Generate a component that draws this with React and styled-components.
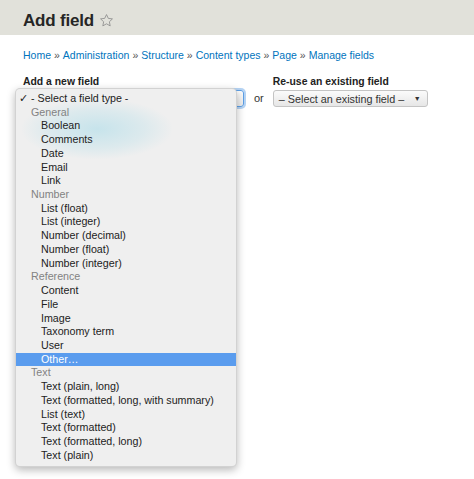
import { Fragment } from "react";
import styled, { createGlobalStyle } from "styled-components";

const GlobalStyle = createGlobalStyle`
  body {
    margin: 0;
    background: #ffffff;
    font-family: "Liberation Sans", Arial, sans-serif;
    color: #333333;
  }

  #root {
    min-height: 100vh;
  }
`;

const Header = styled.header`
  align-items: center;
  background-color: #e1e1da;
  box-sizing: border-box;
  display: flex;
  gap: 5px;
  height: 35px;
  padding: 6px 23px 0;
`;

const Title = styled.h1`
  color: #262626;
  font-family: "Liberation Sans", sans-serif;
  font-size: 17px;
  font-weight: 700;
  letter-spacing: -0.2px;
  margin: 0;
`;

const Star = styled.svg`
  height: 15px;
  width: 15px;
`;

const Main = styled.main`
  padding: 0 23px;
`;

const Breadcrumb = styled.nav`
  color: #0074bd;
  font-size: 10.5px;
  margin-top: 14px;
`;

const Sep = styled.span`
  color: #555555;
  margin: 0 3px;
`;

const FormRow = styled.div`
  align-items: flex-end;
  display: flex;
  margin-top: 14px;
`;

const Field = styled.div`
  display: flex;
  flex-direction: column;
  position: relative;
`;

const Label = styled.label`
  color: #222222;
  font-size: 10.4px;
  font-weight: 700;
  line-height: 13px;
  margin-bottom: 2px;
`;

const Trigger = styled.div`
  background: linear-gradient(#fdfdfd, #ececec);
  border: 1px solid #5d9fe6;
  border-radius: 3px;
  box-shadow: 0 0 0 2px rgba(93, 159, 230, 0.45);
  box-sizing: border-box;
  height: 17px;
  width: 221px;
`;

const Select = styled.div`
  align-items: center;
  background: linear-gradient(#fbfbfb, #e6e6e6);
  border: 1px solid #c4c4c4;
  border-radius: 3px;
  box-sizing: border-box;
  color: #333333;
  display: flex;
  font-size: 10.8px;
  height: 17px;
  justify-content: space-between;
  padding: 0 6px 0 5px;
  width: 155px;
`;

const Arrow = styled.span`
  font-size: 7px;
`;

const Or = styled.span`
  font-size: 11px;
  line-height: 17px;
  margin: 0 9px 0 10px;
`;

const Menu = styled.ul`
  background: #efefef;
  border: 1px solid rgba(0, 0, 0, 0.12);
  border-radius: 5px;
  box-shadow: 0 3px 9px rgba(0, 0, 0, 0.28);
  box-sizing: border-box;
  font-size: 10.7px;
  left: -8px;
  list-style: none;
  margin: 0;
  overflow: hidden;
  padding: 3px 0 4px;
  position: absolute;
  top: 13px;
  width: 222px;
  z-index: 2;
`;

const Glow = styled.div`
  background: radial-gradient(
    ellipse at center,
    rgba(165, 218, 232, 0.55),
    rgba(165, 218, 232, 0.25) 45%,
    rgba(165, 218, 232, 0) 72%
  );
  height: 60px;
  left: 6px;
  pointer-events: none;
  position: absolute;
  top: 10px;
  width: 150px;
`;

const Row = styled.li`
  background: ${(props) => (props.$active ? "#5a9cee" : "transparent")};
  color: ${(props) =>
    props.$active ? "#ffffff" : props.$group ? "#828282" : "#222222"};
  height: 13.73px;
  line-height: 13.73px;
  padding-left: ${(props) =>
    props.$group ? "15px" : props.$first ? "3px" : "25px"};
  position: relative;
  white-space: nowrap;
`;

const Check = styled.span`
  display: inline-block;
  width: 12px;
`;

const groups = [
  ["General", ["Boolean", "Comments", "Date", "Email", "Link"]],
  [
    "Number",
    [
      "List (float)",
      "List (integer)",
      "Number (decimal)",
      "Number (float)",
      "Number (integer)",
    ],
  ],
  [
    "Reference",
    ["Content", "File", "Image", "Taxonomy term", "User", "Other\u2026"],
  ],
  [
    "Text",
    [
      "Text (plain, long)",
      "Text (formatted, long, with summary)",
      "List (text)",
      "Text (formatted)",
      "Text (formatted, long)",
      "Text (plain)",
    ],
  ],
];

const crumbs = [
  "Home",
  "Administration",
  "Structure",
  "Content types",
  "Page",
  "Manage fields",
];

export default function App() {
  return (
    <>
      <GlobalStyle />
      <Header>
        <Title>Add field</Title>
        <Star viewBox="0 0 24 24">
          <path
            d="M12 2.5l2.9 6.1 6.6.8-4.9 4.6 1.3 6.6L12 17.3l-5.9 3.3 1.3-6.6-4.9-4.6 6.6-.8z"
            fill="none"
            stroke="#8a8a8a"
            strokeWidth="1.3"
            strokeLinejoin="round"
          />
        </Star>
      </Header>
      <Main>
        <Breadcrumb>
          {crumbs.map((c, i) => (
            <span key={c}>
              {i > 0 && <Sep>»</Sep>}
              {c}
            </span>
          ))}
        </Breadcrumb>
        <FormRow>
          <Field>
            <Label>Add a new field</Label>
            <Trigger />
            <Menu>
              <Glow />
              <Row $first>
                <Check>✓</Check>- Select a field type -
              </Row>
              {groups.map(([name, items]) => (
                <Fragment key={name}>
                  <Row $group>{name}</Row>
                  {items.map((item) => (
                    <Row key={item} $active={item === "Other\u2026"}>
                      {item}
                    </Row>
                  ))}
                </Fragment>
              ))}
            </Menu>
          </Field>
          <Or>or</Or>
          <Field>
            <Label>Re-use an existing field</Label>
            <Select>
              – Select an existing field –<Arrow>▼</Arrow>
            </Select>
          </Field>
        </FormRow>
      </Main>
    </>
  );
}
